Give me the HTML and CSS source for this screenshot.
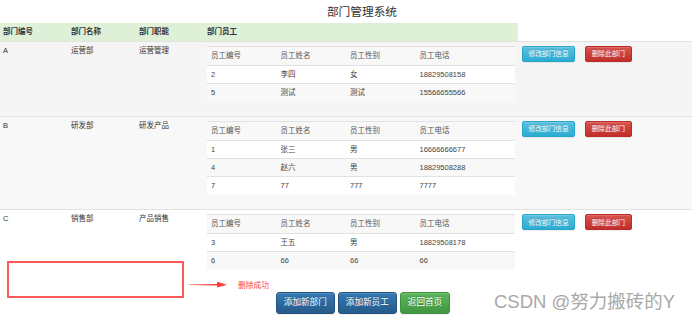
FILE: index.html
```html
<!DOCTYPE html>
<html lang="zh-CN">
<head>
<meta charset="utf-8">
<title>部门管理系统</title>
<link rel="stylesheet" href="styles.css">
</head>
<body>
<div class="page">
  <h1 class="title">部门管理系统</h1>
  <table class="dept">
    <colgroup><col class="c1"><col class="c2"><col class="c3"><col class="c4"><col class="c5"></colgroup>
    <tr class="head">
      <th>部门编号</th><th>部门名称</th><th>部门职能</th><th>部门员工</th><th class="blank"></th>
    </tr>
    <tr class="row-a">
      <td>A</td><td>运营部</td><td>运营管理</td>
      <td>
        <table class="emp">
          <colgroup><col class="e1"><col class="e2"><col class="e3"><col class="e4"></colgroup>
          <tr><td>员工编号</td><td>员工姓名</td><td>员工性别</td><td>员工电话</td></tr>
          <tr><td>2</td><td>李四</td><td>女</td><td>18829508158</td></tr>
          <tr><td>5</td><td>测试</td><td>测试</td><td>15566655566</td></tr>
        </table>
      </td>
      <td class="ops"><div class="op-btns"><button class="btn-s info">修改部门信息</button><button class="btn-s danger">删除此部门</button></div></td>
    </tr>
    <tr class="row-b">
      <td>B</td><td>研发部</td><td>研发产品</td>
      <td>
        <table class="emp">
          <colgroup><col class="e1"><col class="e2"><col class="e3"><col class="e4"></colgroup>
          <tr><td>员工编号</td><td>员工姓名</td><td>员工性别</td><td>员工电话</td></tr>
          <tr><td>1</td><td>张三</td><td>男</td><td>16666666677</td></tr>
          <tr><td>4</td><td>赵六</td><td>男</td><td>18829508288</td></tr>
          <tr><td>7</td><td>77</td><td>777</td><td>7777</td></tr>
        </table>
      </td>
      <td class="ops"><div class="op-btns"><button class="btn-s info">修改部门信息</button><button class="btn-s danger">删除此部门</button></div></td>
    </tr>
    <tr class="row-c">
      <td>C</td><td>销售部</td><td>产品销售</td>
      <td>
        <table class="emp">
          <colgroup><col class="e1"><col class="e2"><col class="e3"><col class="e4"></colgroup>
          <tr><td>员工编号</td><td>员工姓名</td><td>员工性别</td><td>员工电话</td></tr>
          <tr><td>3</td><td>王五</td><td>男</td><td>18829508178</td></tr>
          <tr><td>6</td><td>66</td><td>66</td><td>66</td></tr>
        </table>
      </td>
      <td class="ops"><div class="op-btns"><button class="btn-s info">修改部门信息</button><button class="btn-s danger">删除此部门</button></div></td>
    </tr>
  </table>
  <div class="actions">
    <button class="btn primary">添加新部门</button>
    <button class="btn primary">添加新员工</button>
    <button class="btn success">返回首页</button>
  </div>

  <div class="note-box"></div>
  <svg class="note-arrow" width="42" height="10" viewBox="0 0 42 10">
    <path d="M1 4.6 L31 3.9 L31 5.5 L1 5 Z" fill="#ff3b3b"/>
    <path d="M29 1.8 L39 4.7 L29 7.6 Z" fill="#ff3b3b"/>
  </svg>
  <div class="note-text">删除成功</div>
  <div class="watermark">CSDN @努力搬砖的Y</div>
</div>
</body>
</html>
```
FILE: styles.css
```css
* { box-sizing: border-box; }
html, body {
  margin: 0;
  padding: 0;
  background: #fff;
}
body {
  font-family: "Liberation Sans", "Noto Sans CJK SC", sans-serif;
  color: #333;
  width: 692px;
  height: 323px;
  overflow: hidden;
}
.page {
  position: relative;
  width: 692px;
  height: 323px;
}
.title {
  margin: 0;
  height: 23px;
  line-height: 24px;
  padding-left: 32px;
  text-align: center;
  font-size: 11.7px;
  font-weight: normal;
  color: #333;
}
.dept {
  width: 692px;
  border-collapse: collapse;
  table-layout: fixed;
  font-size: 7.5px;
}
.c1, .c2, .c3 { width: 68px; }
.c4 { width: 314px; }
.c5 { width: 174px; }
.dept > tbody > tr > th,
.dept > tbody > tr > td {
  padding: 4.3px 3px;
  line-height: 9.4px;
  text-align: left;
  vertical-align: top;
}
.dept > tbody > tr > td {
  border-top: 1px solid #e2e2e2;
}
.head th {
  background: #dff0d8;
  font-weight: bold;
  color: #333;
}
.head th.blank { background: #fff; }
.row-a > td { background: #f5f5f5; }
.row-b > td { background: #f8f8f8; }
.row-c > td { background: #fff; }
.dept > tbody > tr > td.ops { padding-left: 4px; }

.emp {
  width: 100%;
  border-collapse: collapse;
  table-layout: fixed;
  margin-bottom: 10px;
  font-size: 7.5px;
  color: #444;
}
.e1, .e2, .e3 { width: 69.5px; }
.emp td {
  padding: 4px;
  line-height: 9.4px;
  border-top: 1px solid #e2e2e2;
  background: #fff;
  white-space: nowrap;
}
.emp tr:nth-child(odd) td { background: #f8f8f8; }
.emp tr:first-child td { color: #555; }

.op-btns {
  display: flex;
  gap: 10px;
}
.btn-s {
  font-family: "Liberation Sans", "Noto Sans CJK SC", sans-serif;
  font-size: 6.7px;
  line-height: 9.6px;
  padding: 2.2px 5.5px;
  border: 1px solid;
  border-radius: 2px;
  color: #fff;
  text-shadow: 0 -1px 0 rgba(0,0,0,.2);
  box-shadow: inset 0 1px 0 rgba(255,255,255,.15), 0 1px 1px rgba(0,0,0,.075);
  white-space: nowrap;
}
.info {
  background: linear-gradient(#5bc0de, #2aabd2);
  border-color: #28a4c9;
}
.danger {
  background: linear-gradient(#d9534f, #c12e2a);
  border-color: #b92c28;
}

.actions {
  display: flex;
  justify-content: center;
  gap: 3px;
  padding-left: 34px;
  margin-top: 8px;
}
.btn {
  font-family: "Liberation Sans", "Noto Sans CJK SC", sans-serif;
  font-size: 8.6px;
  line-height: 11px;
  padding: 4.5px 7px;
  border: 1px solid;
  border-radius: 3px;
  color: #fff;
  text-shadow: 0 -1px 0 rgba(0,0,0,.2);
  box-shadow: inset 0 1px 0 rgba(255,255,255,.15), 0 1px 1px rgba(0,0,0,.075);
  white-space: nowrap;
}
.primary {
  background: linear-gradient(#337ab7, #265a88);
  border-color: #245580;
}
.success {
  background: linear-gradient(#5cb85c, #419641);
  border-color: #3e8f3e;
}

.note-box {
  position: absolute;
  left: 7px;
  top: 261px;
  width: 177px;
  height: 37px;
  border: 2px solid #ff5a5a;
}
.note-arrow {
  position: absolute;
  left: 188px;
  top: 280px;
}
.note-text {
  position: absolute;
  left: 238px;
  top: 281px;
  font-size: 7.75px;
  line-height: 10px;
  color: #ff4040;
}
.watermark {
  position: absolute;
  left: 494px;
  top: 292px;
  font-size: 18.5px;
  line-height: 20px;
  color: #a8a8a8;
  text-shadow: 0 0 1px rgba(255,255,255,.9);
  white-space: nowrap;
}
```
